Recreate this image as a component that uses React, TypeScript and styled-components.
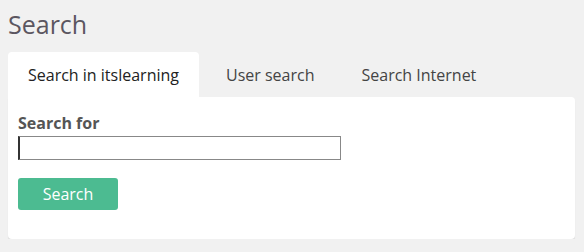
import React, { useState } from "react";
import styled, { createGlobalStyle } from "styled-components";

const GlobalStyle = createGlobalStyle`
    html, body {
        margin: 0;
        padding: 0;
        background: #f1f1f1;
        font-family: "Open Sans", "Liberation Sans", sans-serif;
    }
`;

const Page = styled.div`
    padding: 8px 9px 0 8px;
    width: 567px;
`;

const Title = styled.h1`
    font-size: 25px;
    font-weight: normal;
    color: #5b5660;
    margin: 0 0 12px 0;
    line-height: 32px;
`;

const Tabs = styled.div`
    display: flex;
    gap: 7px;
`;

const Tab = styled.button<{ $active?: boolean }>`
    font-family: inherit;
    font-size: 16px;
    color: ${(p) => (p.$active ? "#222" : "#444")};
    background: ${(p) => (p.$active ? "#fff" : "transparent")};
    border: none;
    border-radius: 4px 4px 0 0;
    padding: 0 20px;
    height: 45px;
    cursor: pointer;
`;

const Panel = styled.div`
    background: #fff;
    border-radius: 0 4px 4px 4px;
    box-shadow: 0 2px 1px #ddd;
    padding: 16px 10px 29px 10px;
`;

const Label = styled.label`
    display: block;
    font-weight: bold;
    font-size: 16px;
    line-height: 20px;
    color: #555;
    margin-bottom: 3px;
`;

const Input = styled.input`
    display: block;
    width: 323px;
    height: 24px;
    box-sizing: border-box;
    border: 1px solid #888;
    border-left: 2px solid #333;
    margin: 0 0 18px 0;
    font-family: inherit;
`;

const Button = styled.button`
    font-family: inherit;
    font-size: 16px;
    color: #fff;
    background: #4cbb91;
    border: none;
    border-radius: 3px;
    width: 100px;
    height: 32px;
    cursor: pointer;
`;

const tabs = ["Search in itslearning", "User search", "Search Internet"];

const App = () => {
    const [active, setActive] = useState(0);

    return (
        <Page>
            <GlobalStyle />
            <Title>Search</Title>
            <Tabs>
                {tabs.map((t, i) => (
                    <Tab key={t} $active={i === active} onClick={() => setActive(i)}>
                        {t}
                    </Tab>
                ))}
            </Tabs>
            <Panel>
                <Label htmlFor="q">Search for</Label>
                <Input id="q" />
                <Button>Search</Button>
            </Panel>
        </Page>
    );
};

export default App;
